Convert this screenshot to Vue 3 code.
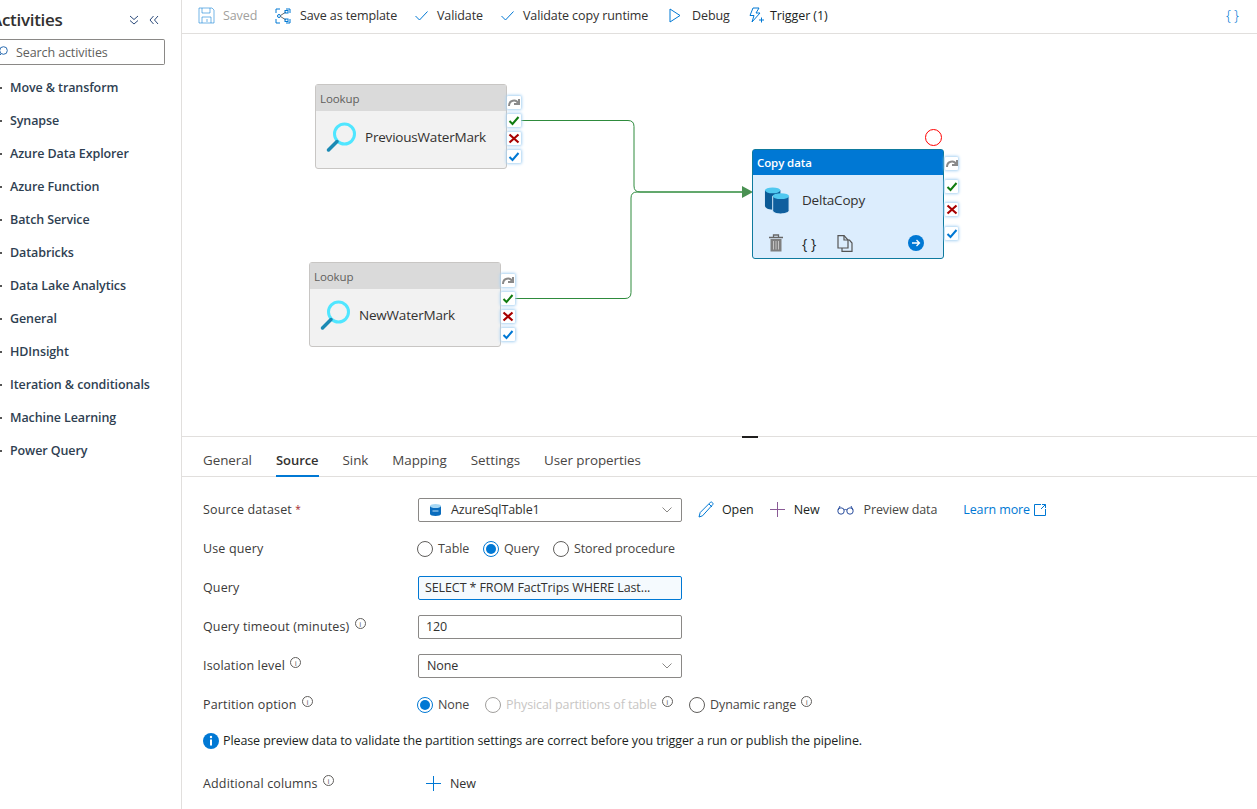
<template>
  <div class="app">
    <aside class="sidebar">
      <div class="side-head">
        <h2>Activities</h2>
        <svg class="side-icon" width="12" height="12" viewBox="0 0 12 12"><path d="M2 2l4 3.500L10 2M2 6.500L6 10l4-3.500" /></svg>
        <svg class="side-icon" width="12" height="12" viewBox="0 0 12 12"><path d="M5.500 2L2 6l3.500 4M10 2L6.500 6l3.500 4" /></svg>
      </div>
      <div class="search">
        <svg width="12" height="12" viewBox="0 0 12 12"><circle cx="3.500" cy="4.500" r="3.800" /><path d="M1 8l-2 2" /></svg>
        <span>Search activities</span>
      </div>
      <ul class="groups">
        <li v-for="g in groups" :key="g"><i></i>{{ g }}</li>
      </ul>
    </aside>

    <main class="main">
      <div class="toolbar">
        <div class="tool saved" style="width:77px">
          <svg width="17" height="17" viewBox="0 0 17 17" class="blue"><path d="M1 1h13l2 2v13H1zM4 1v5h8V1M4 16v-6h9v6M9 12v3" opacity=".55" /></svg>
          <span>Saved</span>
        </div>
        <div class="tool wide" style="width:140px">
          <svg width="16" height="16" viewBox="0 0 16 16" class="blue"><path d="M1 5V1h4M11 1h4v4M1 11v4h4M15 11v4h-4" /><circle cx="4" cy="8" r="1.500" /><path d="M5.500 7.500L11 4M5.500 8.500L11 12" stroke="#666" /><rect x="10" y="2.500" width="3" height="2.500" /><rect x="10" y="11" width="3" height="2.500" /></svg>
          <span>Save as template</span>
        </div>
        <div class="tool wide" style="width:86px">
          <svg width="13" height="10" viewBox="0 0 13 10" class="blue"><path d="M.5 5l4 4 8-8.500" /></svg>
          <span>Validate</span>
        </div>
        <div class="tool wide" style="width:168px">
          <svg width="13" height="10" viewBox="0 0 13 10" class="blue"><path d="M.5 5l4 4 8-8.500" /></svg>
          <span>Validate copy runtime</span>
        </div>
        <div class="tool debug" style="width:79px">
          <svg width="12" height="15" viewBox="0 0 12 15" class="blue"><path d="M1 1l10 6.500L1 14z" /></svg>
          <span>Debug</span>
        </div>
        <div class="tool trigger">
          <svg width="16" height="17" viewBox="0 0 16 17" class="blue"><path d="M5 1h6L8 6h4l-8 9 2-6.500H2zM11 13h5M13.500 10.500v5" /></svg>
          <span>Trigger (1)</span>
        </div>
        <div class="braces">{}</div>
      </div>

      <div class="canvas">
        <svg class="wires" width="1076" height="402" viewBox="0 0 1076 402">
          <path d="M339 86.500H446q6 0 6 6V152q0 6 6 6H562" />
          <path d="M333 264.500H443q6 0 6-6V164q0-6 6-6H562" />
          <path class="head" d="M560 152l11 6-11 6z" />
        </svg>

        <div v-for="n in nodes" :key="n.name" class="node" :class="{ active: n.active }" :style="{ left: n.x + 'px', top: n.y + 'px' }">
          <div class="node-head">{{ n.type }}</div>
          <div class="node-body">
            <svg v-if="!n.active" width="32" height="32" viewBox="0 0 32 32">
              <circle cx="18.500" cy="13" r="10" fill="none" stroke="#50e6ff" stroke-width="3" />
              <path d="M11 20.500L2.500 29" stroke="#1b8ab4" stroke-width="3.500" stroke-linecap="round" />
            </svg>
            <svg v-else width="27" height="30" viewBox="0 0 28 30">
              <path d="M1 5v16c0 2 3 4 8 4s8-2 8-4V5z" fill="#0b5a96" />
              <ellipse cx="9" cy="5" rx="8" ry="3" fill="#50c8f0" />
              <path d="M9 11v15c0 2 4 3.500 8 3.500s9-1.500 9-3.500V11z" fill="#0f5f9e" stroke="#dbedfd" />
              <ellipse cx="17.500" cy="11" rx="8.500" ry="3" fill="#50c8f0" />
            </svg>
            <span>{{ n.name }}</span>
          </div>
          <div v-if="n.active" class="node-actions">
            <svg width="16" height="18" viewBox="0 0 16 18"><path d="M1 3.500h14M5.500 3V1h5v2" stroke="#666" fill="none" stroke-width="1.300" /><path d="M2.500 5h11v12.500h-11z" fill="#7f7f7f" /><path d="M5.500 7v8.500M8 7v8.500M10.500 7v8.500" stroke="#c4c4c4" /></svg>
            <span class="node-braces">{ }</span>
            <svg width="16" height="17" viewBox="0 0 16 17" fill="none" stroke="#555" stroke-width="1.200"><path d="M1 .6h6L11 5v8H1z" /><path d="M7 .6V5h4" /><path d="M11 5h1.500L15 8v8.400H5V13" /></svg>
            <svg class="go" width="16" height="16" viewBox="0 0 16 16"><circle cx="8" cy="8" r="8" fill="#0078d4" /><path d="M4 8h7.500M8.500 5l3 3-3 3" stroke="#fff" stroke-width="1.300" fill="none" /></svg>
          </div>
          <div v-for="(h, i) in handles" :key="h" class="handle" :class="h" :style="{ top: (n.active ? activeTops[i] : tops[i]) + 'px' }">
            <svg width="12" height="11" viewBox="0 0 12 11">
              <path v-if="h === 'skip'" d="M1 9c0-6 7-7 9-3M11 2v5H6" fill="none" stroke="#8a8a8a" stroke-width="2" />
              <path v-else-if="h === 'ok'" d="M1.500 6l3 3 6-7" fill="none" stroke="#107c10" stroke-width="2" />
              <path v-else-if="h === 'fail'" d="M1.500 1.500l9 8M10.500 1.500l-9 8" fill="none" stroke="#a80000" stroke-width="2.200" />
              <path v-else d="M1.500 6l3 3 6-7" fill="none" stroke="#0078d4" stroke-width="2" />
            </svg>
          </div>
        </div>
        <div class="red-dot"></div>
      </div>

      <div class="splitter"><b></b></div>

      <div class="tabs">
        <span v-for="t in tabs" :key="t" class="tab" :class="{ on: t === 'Source' }">{{ t }}</span>
      </div>

      <div class="form">
        <div class="row">
          <label>Source dataset <em>*</em></label>
          <div class="field select">
            <svg width="11" height="12" viewBox="0 0 11 12"><path d="M0 2v8c0 1 2.500 2 5.500 2s5.500-1 5.500-2V2z" fill="#0a6cbd" /><ellipse cx="5.500" cy="2" rx="5.500" ry="2" fill="#a6d8f5" /><path d="M2.500 7h6" stroke="#bfe0f7" /></svg>
            <span class="sel-text">AzureSqlTable1</span>
            <svg class="chev" width="10" height="6" viewBox="0 0 10 6"><path d="M.5.500L5 5 9.500.500" /></svg>
          </div>
          <div class="row-actions">
            <span class="act open"><svg width="17" height="17" viewBox="0 0 17 17" class="blue"><path d="M1 16l1.200-4.500L12.500 1.200c1-1 3.300 1.300 2.300 2.300L4.500 14.800zM11 3l3 3" /></svg>Open</span>
            <span class="act new"><svg width="15" height="15" viewBox="0 0 15 15" class="purple"><path d="M7.500 0v15M0 7.500h15" /></svg>New</span>
            <span class="act muted"><svg width="17" height="10" viewBox="0 0 17 10" class="navy"><circle cx="4" cy="6" r="3.200" /><circle cx="13" cy="6" r="3.200" /><path d="M7 5c1-.7 2-.7 3 0M1 5l2-4M16 5l-2-4" /></svg>Preview data</span>
            <span class="learn">Learn more
              <svg width="12" height="12" viewBox="0 0 12 12" class="blue"><path d="M7 .5h-6.500v11h11V5M7 5l4.500-4.500M8 .5h3.500V4" /></svg>
            </span>
          </div>
        </div>

        <div class="row">
          <label>Use query</label>
          <div class="radios">
            <span class="radio" style="width:66px"><i></i>Table</span>
            <span class="radio on" style="width:70px"><i></i>Query</span>
            <span class="radio"><i></i>Stored procedure</span>
          </div>
        </div>

        <div class="row">
          <label>Query</label>
          <div class="field focus">SELECT * FROM FactTrips WHERE Last...</div>
        </div>

        <div class="row">
          <label>Query timeout (minutes) <sup class="info">i</sup></label>
          <div class="field">120</div>
        </div>

        <div class="row">
          <label>Isolation level <sup class="info">i</sup></label>
          <div class="field select">
            <span class="sel-plain">None</span>
            <svg class="chev" width="10" height="6" viewBox="0 0 10 6"><path d="M.5.500L5 5 9.500.500" /></svg>
          </div>
        </div>

        <div class="row">
          <label>Partition option <sup class="info">i</sup></label>
          <div class="radios">
            <span class="radio on" style="width:68px"><i></i>None</span>
            <span class="radio off" style="width:204px"><i></i><span>Physical partitions of table <sup class="info">i</sup></span></span>
            <span class="radio"><i></i><span>Dynamic range <sup class="info">i</sup></span></span>
          </div>
        </div>

        <div class="notice">
          <svg width="16" height="16" viewBox="0 0 16 16"><circle cx="8" cy="8" r="8" fill="#0078d4" /><path d="M8 6.500v6" stroke="#fff" stroke-width="2" /><circle cx="8" cy="4" r="1.200" fill="#fff" /></svg>
          <span>Please preview data to validate the partition settings are correct before you trigger a run or publish the pipeline.</span>
        </div>

        <div class="row extra">
          <label>Additional columns <sup class="info">i</sup></label>
          <span class="act add"><svg width="15" height="15" viewBox="0 0 15 15" class="blue"><path d="M7.500 0v15M0 7.500h15" /></svg>New</span>
        </div>
      </div>
    </main>
  </div>
</template>

<script setup>
const groups = [
  'Move & transform',
  'Synapse',
  'Azure Data Explorer',
  'Azure Function',
  'Batch Service',
  'Databricks',
  'Data Lake Analytics',
  'General',
  'HDInsight',
  'Iteration & conditionals',
  'Machine Learning',
  'Power Query',
]

const tabs = ['General', 'Source', 'Sink', 'Mapping', 'Settings', 'User properties']

// canvas coordinates, canvas starts at x=182 y=34
const nodes = [
  { name: 'PreviousWaterMark', type: 'Lookup', x: 133, y: 50 },
  { name: 'NewWaterMark', type: 'Lookup', x: 127, y: 228 },
  { name: 'DeltaCopy', type: 'Copy data', x: 570, y: 115, active: true },
]

const handles = ['skip', 'ok', 'fail', 'done']
const tops = [11, 29, 47, 65]
const activeTops = [7, 30, 53, 77]
</script>

<style>
html, body {
  margin: 0;
  background: #fff;
}
</style>

<style scoped>
.app {
  display: flex;
  width: 1257px;
  height: 809px;
  overflow: hidden;
  font-family: "Open Sans", "Noto Sans", sans-serif;
  font-size: 12.5px;
  letter-spacing: -0.1px;
  color: #323130;
  background: #fff;
}
svg {
  flex: none;
}
svg.blue, svg.purple, svg.navy {
  fill: none;
  stroke-width: 1;
}
svg.blue { stroke: #0078d4; }
svg.purple { stroke: #8a5a96; }
svg.navy { stroke: #2b4f9e; }

/* left list */
.sidebar {
  width: 181px;
  flex: none;
  border-right: 1px solid #e1dfdd;
}
.side-head {
  display: flex;
  align-items: center;
  height: 39px;
  padding-right: 21px;
}
.side-head h2 {
  flex: 1;
  margin: 0 0 0 -9px;
  font-size: 17px;
  font-weight: 600;
  letter-spacing: -0.3px;
  color: #323130;
}
.side-icon {
  margin-left: 8px;
  fill: none;
  stroke: #2b4a7a;
}
.search {
  display: flex;
  align-items: center;
  gap: 4px;
  box-sizing: border-box;
  width: 165px;
  height: 26px;
  border: 1px solid #8a8886;
  border-left: 0;
  border-radius: 0 2px 2px 0;
  color: #605e5c;
}
.search svg {
  fill: none;
  stroke: #2b6cb0;
  overflow: visible;
}
.groups {
  list-style: none;
  margin: 6px 0 0;
  padding: 0;
}
.groups li {
  display: flex;
  align-items: center;
  height: 33px;
  padding-left: 10px;
  font-weight: 600;
  letter-spacing: -0.1px;
  color: #2f3f52;
  position: relative;
}
.groups li i {
  position: absolute;
  left: 0;
  top: 16px;
  width: 2px;
  height: 2px;
  background: #555;
}

.main {
  flex: 1;
  min-width: 0;
  display: flex;
  flex-direction: column;
}

/* top bar */
.toolbar {
  display: flex;
  align-items: center;
  height: 31px;
  padding: 0 0 2px 16px;
  border-bottom: 1px solid #e1dfdd;
  flex: none;
}
.tool {
  display: flex;
  align-items: center;
  gap: 8px;
  flex: none;
  box-sizing: border-box;
}
.tool.wide {
  gap: 9px;
}
.tool.debug {
  gap: 11px;
}
.tool.saved {
  color: #a19f9d;
}
.tool.trigger {
  color: #201f1e;
  gap: 6px;
}
.braces {
  margin-left: auto;
  margin-right: 15px;
  color: #0078d4;
  font-size: 14px;
  font-weight: 300;
  letter-spacing: 3px;
}

/* pipeline canvas */
.canvas {
  position: relative;
  height: 402px;
  flex: none;
}
.wires {
  position: absolute;
  left: 0;
  top: 0;
}
.wires path {
  fill: none;
  stroke: #2e8b3d;
  stroke-width: 1;
}
.wires path.head {
  fill: #4a9152;
  stroke: none;
}
.node {
  position: absolute;
  box-sizing: border-box;
  width: 192px;
  height: 85px;
  border: 1px solid #c8c6c4;
  border-radius: 3px;
  background: #f2f2f2;
}
.node-head {
  height: 26px;
  line-height: 28px;
  padding-left: 4px;
  background: #dadada;
  color: #605e5c;
  font-size: 11.5px;
}
.node-body {
  display: flex;
  align-items: center;
  gap: 7px;
  box-sizing: border-box;
  height: 50px;
  padding: 2px 0 0 10px;
  font-size: 13.5px;
  letter-spacing: -0.2px;
}
.node.active {
  height: 110px;
  border-color: #0e7a9e;
  background: #dcedfd;
}
.node.active .node-head {
  height: 25px;
  line-height: 25px;
  background: #0078d4;
  color: #fff;
  font-weight: 600;
}
.node.active .node-body {
  gap: 11px;
  padding: 0 0 0 11px;
  height: 50px;
}
.node-actions {
  display: flex;
  align-items: center;
  height: 33px;
  padding: 3px 0 0 15px;
  box-sizing: border-box;
}
.node-braces {
  margin-left: 18px;
  width: 35px;
  font-size: 14px;
  letter-spacing: 0;
  color: #201f1e;
}
.go {
  margin-left: 55px;
}
.handle {
  position: absolute;
  left: 191px;
  width: 14px;
  height: 13px;
  display: flex;
  align-items: center;
  justify-content: center;
  background: #fff;
  box-shadow: 0 0 3px 1px #a9d2f2;
  border-radius: 1px;
}
.node.active .handle {
  left: 192px;
  width: 13px;
}
.red-dot {
  position: absolute;
  left: 743px;
  top: 95px;
  box-sizing: border-box;
  width: 17px;
  height: 17px;
  border: 1px solid #ff0000;
  border-radius: 50%;
}

.splitter {
  position: relative;
  height: 1px;
  background: #e1dfdd;
  flex: none;
}
.splitter b {
  position: absolute;
  left: 560px;
  top: 0;
  width: 16px;
  height: 2px;
  background: #201f1e;
}

/* tabs */
.tabs {
  display: flex;
  gap: 24px;
  height: 39px;
  padding-left: 21px;
  border-bottom: 1px solid #e1dfdd;
  flex: none;
  font-size: 13.4px;
  letter-spacing: -0.05px;
}
.tab {
  display: flex;
  align-items: center;
  box-sizing: border-box;
  height: 40px;
  padding-top: 6px;
  color: #484644;
}
.tab.on {
  font-weight: 600;
  font-size: 13px;
  color: #323130;
  border-bottom: 2px solid #0078d4;
  padding-top: 8px;
}

/* form */
.form {
  padding: 13px 0 0 21px;
}
.row {
  display: flex;
  align-items: center;
  height: 39px;
}
.row label {
  width: 215px;
  flex: none;
  font-weight: 500;
  letter-spacing: 0.15px;
  color: #3b3a39;
}
.row label em {
  color: #a4262c;
  font-style: normal;
  font-size: 10px;
  font-weight: 400;
  vertical-align: 1px;
}
.info {
  display: inline-block;
  box-sizing: border-box;
  width: 11px;
  height: 11px;
  margin-left: 2px;
  border: 1px solid #605e5c;
  border-radius: 50%;
  font-size: 8px;
  line-height: 9px;
  text-align: center;
  vertical-align: 4px;
  color: #605e5c;
  letter-spacing: 0;
}
.field {
  display: flex;
  align-items: center;
  box-sizing: border-box;
  width: 264px;
  height: 24px;
  padding: 0 7px;
  border: 1px solid #8a8886;
  border-radius: 2px;
  flex: none;
  background: #fff;
}
.field.focus {
  border-color: #0078d4;
  background: #f5fafe;
  padding: 0 6px;
  white-space: nowrap;
}
.select {
  padding: 0 9px 0 11px;
}
.sel-text {
  flex: 1;
  margin-left: 10px;
}
.sel-plain {
  flex: 1;
  margin-left: -3px;
}
.chev {
  fill: none;
  stroke: #8a8886;
}
.row-actions {
  display: flex;
  align-items: center;
  margin-left: 16px;
}
.act {
  display: inline-flex;
  align-items: center;
  gap: 9px;
  margin-right: 17px;
  color: #201f1e;
}
.act.open {
  gap: 7px;
  margin-right: 16px;
}
.act.new {
  margin-right: 18px;
}
.act.muted {
  color: #484644;
}
.learn {
  display: inline-flex;
  align-items: center;
  gap: 4px;
  margin-left: 9px;
  color: #0078d4;
}
.radios {
  display: flex;
  align-items: center;
  margin-left: -1px;
}
.radio {
  display: inline-flex;
  align-items: center;
  gap: 5px;
  flex: none;
  color: #484644;
}
.radio i {
  position: relative;
  box-sizing: border-box;
  width: 16px;
  height: 16px;
  border: 1px solid #605e5c;
  border-radius: 50%;
}
.radio.on i {
  border-color: #0078d4;
}
.radio.on i::after {
  content: "";
  position: absolute;
  left: 2px;
  top: 2px;
  width: 10px;
  height: 10px;
  border-radius: 50%;
  background: #0078d4;
}
.radio.off {
  color: #c8c6c4;
}
.radio.off i {
  border-color: #a19f9d;
}
.notice {
  display: flex;
  align-items: center;
  gap: 4px;
  height: 33px;
  color: #201f1e;
}
.row.extra {
  height: 53px;
}
.add {
  margin-left: 8px;
  gap: 9px;
  color: #323130;
}
</style>
